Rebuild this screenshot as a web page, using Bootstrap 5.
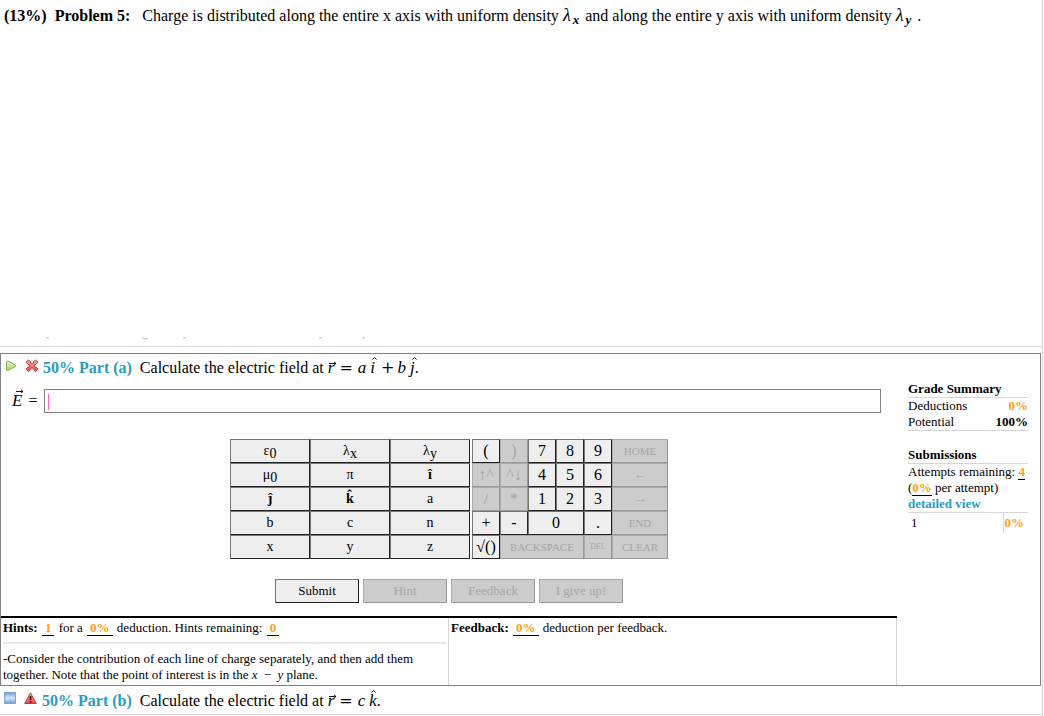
<!DOCTYPE html>
<html lang="en">
<head>
<meta charset="utf-8">
<meta name="viewport" content="width=device-width, initial-scale=1">
<title>Problem 5</title>
<link href="https://cdn.jsdelivr.net/npm/bootstrap@5.3.0/dist/css/bootstrap.min.css" rel="stylesheet">
<style>
  :root { --line: #d6d6d6; --frame: #808080; --teal: #2a9cbc; --orange: #ff9c1a; }
  body { font-family: "Liberation Serif", "Times New Roman", serif; font-size: 13px; line-height: 16px; color: #000; background: #fff; }
  .sheet { border-right: 1px solid var(--line); border-bottom: 1px solid var(--line); margin-right: 1px; }
  .statement { min-height: 347px; border-bottom: 1px solid var(--line); font-size: 16px; line-height: 18px; padding: 6px 4px 0; }
  .statement p { flex: 1; }
  .statement svg { display: block; margin-left: -4px; margin-bottom: 6px; }
  .part-a { border: 1px solid var(--frame); margin-top: 6px; margin-right: 1px; }
  .part-head { font-size: 16px; line-height: 18px; padding: 5px 4px 0; }
  .part-b { padding: 6px 3px 4px; }
  .part-head b { color: var(--teal); }
  .part-head svg { flex: none; }
  .math { font-style: italic; }
  .lambda { font-size: 18px; line-height: 18px; }
  .math sub { font-size: 13px; font-weight: bold; line-height: 0; bottom: -3px; padding: 0 2px; }
  .key sub { font-size: 14px; line-height: 0; bottom: -3px; }
  .accent { position: relative; display: inline-block; font-size: 17px; line-height: 18px; }
  .accent svg { position: absolute; left: 0; top: 2px; width: 9px; height: 5px; overflow: visible; }
  .accent.tall svg { top: -3px; }
  .accent.caps svg { left: 3px; top: -3px; }
  .op { font-family: "DejaVu Serif", serif; font-size: 16px; line-height: 16px; padding: 0 5px; }
  .plus { padding: 0 3px 0 6px; }
  .minus { padding: 0 3px; }
  .thin { padding-right: 4px; }
  .answer-row { margin-top: 12px; margin-bottom: 26px; }
  .answer-label { width: 43px; padding-left: 11px; font-size: 16px; line-height: 18px; white-space: nowrap; }
  .eq { padding-left: 2px; }
  .answer { height: 24px; border: 1px solid var(--frame); border-radius: 0; padding: 0 4px; background: #fff; }
  .answer-wrap::before { content: ""; position: absolute; left: 4px; top: 5px; width: 1px; height: 16px; background: #f08; opacity: .6; }
  .main-col { flex: 1; min-width: 0; }
  .side-col { width: 143px; padding: 27px 12px 0 11px; }
  .keypads { gap: 2px; }
  .keys { display: grid; grid-auto-rows: 24px; }
  .symbols { grid-template-columns: repeat(3, 80px); }
  .numbers { grid-template-columns: repeat(5, 28px) 56px; }
  .two { grid-column: span 2; }
  .three { grid-column: span 3; }
  .key { border: 1px solid; border-color: #767676 #222 #222 #767676; border-radius: 0; background: #eee; color: #000; font-size: 16px; line-height: 20px; padding: 0; white-space: nowrap; overflow: hidden; }
  .key:disabled { background: #ccc; color: #a6a6a6; border-color: #aaa #999 #999 #aaa; }
  .symbols .key { font-size: 14px; }
  .numbers .word { font-size: 11px; }
  .numbers .arrow { font-size: 13px; }
  .numbers .tiny { font-size: 8px; }
  .actions { margin: 20px 0 13px; }
  .action { width: 84px; height: 24px; font-size: 13px; }
  .notes { border-top: 2px solid #000; }
  .note { min-height: 67px; border-right: 1px solid var(--line); padding: 2px 2px 0; }
  .value { color: var(--orange); font-weight: bold; border-bottom: 1px solid #000; padding: 0 3px; margin: 0 1px; display: inline-block; line-height: 15px; }
  .divider { border-top: 2px solid #e8e8e8; margin: 6px 0 7px; }
  .side-title { font-weight: bold; border-bottom: 1px solid var(--line); }
  .rule { border-bottom: 1px solid var(--line); }
  .orange { color: var(--orange); font-weight: bold; }
  .flat { padding: 0; margin: 0; }
  a.view { color: var(--teal); font-weight: bold; text-decoration: none; }
  .log { width: 100%; }
  .log td { padding: 2px 3px; border-top: 1px solid var(--line); }
  .log td + td { border-left: 1px solid var(--line); width: 25px; padding: 2px 1px; }
</style>
</head>
<body>
<svg width="0" height="0" class="position-absolute" aria-hidden="true">
  <defs>
    <linearGradient id="green" x2="0" y2="1"><stop stop-color="#eef8d8"/><stop offset="1" stop-color="#a5d468"/></linearGradient>
    <linearGradient id="blue" x2="0" y2="1"><stop stop-color="#6f9fd6"/><stop offset=".5" stop-color="#d3e5f8"/><stop offset="1" stop-color="#6f9fd6"/></linearGradient>
    <linearGradient id="red" x2="0" y2="1"><stop stop-color="#f7b0b0"/><stop offset="1" stop-color="#e84a4a"/></linearGradient>
  </defs>
  <symbol id="hat" viewBox="0 0 9 5"><path d="M2.500 3.500L4.500 1.500L6.500 3.500" fill="none" stroke="#000"/></symbol>
  <symbol id="vec" viewBox="0 0 9 5"><path d="M1 2.500H8M6 1L8 2.500L6 4" fill="none" stroke="#000" stroke-width=".9"/></symbol>
</svg>
<main class="sheet">
  <section class="statement d-flex flex-column">
    <p class="m-0"><b>(13%)&nbsp; Problem 5:</b> &nbsp; Charge is distributed along the entire x axis with uniform density <span class="math lambda">λ<sub>x</sub></span> and along the entire y axis with uniform density <span class="math lambda">λ<sub>y</sub></span> .</p>
    <svg width="400" height="3" fill="none" stroke="#bbb" aria-hidden="true"><path d="M46 1h3M142 1q3 2 6 0M183 1h3M319 1h3M362 1h3"/></svg>
  </section>

  <section class="part-a d-flex">
    <div class="main-col">
      <div class="part-head d-flex">
        <svg width="12" height="14" viewBox="0 0 12 14" class="me-2" aria-hidden="true"><path d="M1.500 2.500L3 2L10.500 6V7.500L3 11.500L1.500 11Z" fill="url(#green)" stroke="#86b04c" stroke-linejoin="round"/></svg>
        <svg width="14" height="14" viewBox="0 0 14 14" class="me-1" aria-hidden="true"><path d="M3.500 .8L5.500 2.800V4L7 4.500L8.500 4V2.800L10.500 .8L13 3.200L11 5.300H9.800L9.500 6.800L9.800 8H11L13 10.200L10.500 12.600L8.500 10.600V9.500L7 9L5.500 9.500V10.600L3.500 12.600L1 10.200L3 8H4.200L4.500 6.800L4.200 5.300H3L1 3.200Z" fill="url(#red)" stroke="#c04040" stroke-linejoin="round"/></svg>
        <div><b>50% Part (a)</b>&nbsp; Calculate the electric field at <span class="math accent">r<svg><use href="#vec"/></svg></span><span class="op">=</span><span class="math accent">a</span> <span class="math accent tall">i<svg><use href="#hat"/></svg></span><span class="op plus">+</span><span class="math accent thin">b</span><span class="math accent tall">j<svg><use href="#hat"/></svg></span>.</div>
      </div>
      <div class="answer-row d-flex align-items-center">
        <label for="answer" class="answer-label"><span class="math accent caps">E<svg><use href="#vec"/></svg></span><span class="eq"> =</span></label>
        <div class="answer-wrap position-relative flex-fill me-3"><input id="answer" class="answer form-control" type="text"></div>
      </div>
      <div class="keypads d-flex justify-content-center">
        <div class="keys symbols">
          <button class="key">ε<sub>0</sub></button><button class="key">λ<sub>x</sub></button><button class="key">λ<sub>y</sub></button>
          <button class="key">μ<sub>0</sub></button><button class="key">π</button><button class="key"><b>î</b></button>
          <button class="key"><b>ĵ</b></button><button class="key"><b>k̂</b></button><button class="key">a</button>
          <button class="key">b</button><button class="key">c</button><button class="key">n</button>
          <button class="key">x</button><button class="key">y</button><button class="key">z</button>
        </div>
        <div class="keys numbers">
          <button class="key">(</button><button class="key" disabled>)</button><button class="key">7</button><button class="key">8</button><button class="key">9</button><button class="key word" disabled>HOME</button>
          <button class="key" disabled>↑^</button><button class="key" disabled>^↓</button><button class="key">4</button><button class="key">5</button><button class="key">6</button><button class="key arrow" disabled>←</button>
          <button class="key" disabled>/</button><button class="key" disabled>*</button><button class="key">1</button><button class="key">2</button><button class="key">3</button><button class="key arrow" disabled>→</button>
          <button class="key">+</button><button class="key">-</button><button class="key two">0</button><button class="key">.</button><button class="key word" disabled>END</button>
          <button class="key">√()</button><button class="key word three" disabled>BACKSPACE</button><button class="key tiny" disabled>DEL</button><button class="key word" disabled>CLEAR</button>
        </div>
      </div>
      <div class="actions d-flex justify-content-center gap-1">
        <button class="key action">Submit</button><button class="key action" disabled>Hint</button><button class="key action" disabled>Feedback</button><button class="key action" disabled>I give up!</button>
      </div>
      <div class="notes row g-0">
        <div class="note col-6"><b>Hints:</b> <span class="value">1</span> for a <span class="value">0%</span> deduction. Hints remaining: <span class="value">0</span>
          <div class="divider"></div>
          <div>-Consider the contribution of each line of charge separately, and then add them together. Note that the point of interest is in the <i>x</i><span class="minus"> − </span><i>y</i> plane.</div>
        </div>
        <div class="note col-6"><b>Feedback:</b> <span class="value">0%</span> deduction per feedback.</div>
      </div>
    </div>
    <aside class="side-col">
      <div class="side-title">Grade Summary</div>
      <div class="d-flex justify-content-between"><span>Deductions</span><span class="orange">0%</span></div>
      <div class="d-flex justify-content-between rule"><span>Potential</span><b>100%</b></div>
      <div class="side-title mt-3">Submissions</div>
      <div class="text-nowrap">Attempts remaining: <span class="value flat">4</span></div>
      <div>(<span class="value flat">0%</span> per attempt)</div>
      <a class="view" href="#">detailed view</a>
      <table class="log"><tr><td>1</td><td class="orange">0%</td></tr></table>
    </aside>
  </section>

  <section class="part-head part-b d-flex">
    <svg width="13" height="14" viewBox="0 0 13 14" class="me-2" aria-hidden="true"><path d="M1.500 .5h11v11H1.500Z" fill="url(#blue)" stroke="#7fa3cc"/></svg>
    <svg width="14" height="14" viewBox="0 0 14 14" class="me-1" aria-hidden="true"><path d="M6.500 .8L12.300 11.500H.7Z" fill="url(#red)" stroke="#c04040" stroke-linejoin="round"/><path d="M6.500 4V8M6.500 9V10.500" stroke="#400" stroke-width="1.600"/></svg>
    <div><b>50% Part (b)</b>&nbsp; Calculate the electric field at <span class="math accent">r<svg><use href="#vec"/></svg></span><span class="op">=</span><span class="math accent thin">c</span><span class="math accent tall">k<svg><use href="#hat"/></svg></span>.</div>
  </section>
</main>
<script src="https://cdn.jsdelivr.net/npm/bootstrap@5.3.0/dist/js/bootstrap.bundle.min.js"></script>
</body>
</html>
